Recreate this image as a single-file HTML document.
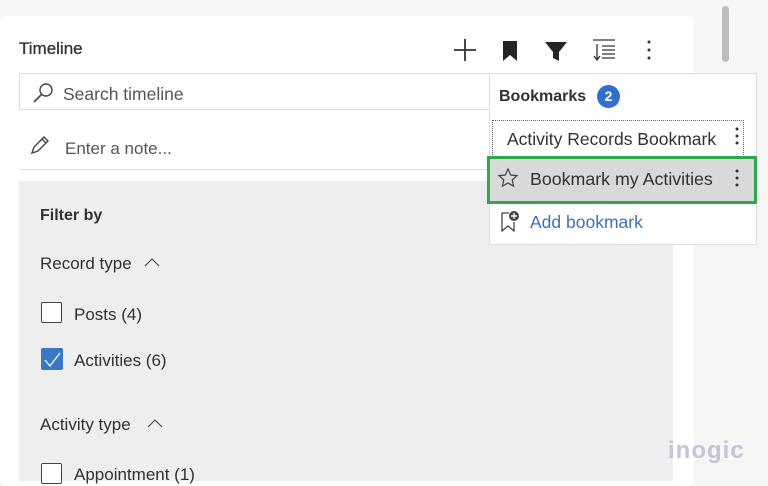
<!DOCTYPE html>
<html><head><style>
body{margin:0;width:768px;height:478px;overflow:hidden;background:#f7f6f5;font-family:"Liberation Sans",sans-serif;color:#323130;position:relative}
.a{position:absolute}
.card{left:0;top:16px;width:694px;height:470px;background:#fff;border-radius:6px}
.t{font-size:17px;white-space:nowrap}
</style></head><body>
<div class="a card"></div>
<div class="a" style="left:722px;top:6px;width:7px;height:56px;background:#bdbdbd;border-radius:4px"></div>
<div class="a t" style="left:19px;top:39px;font-size:17px;-webkit-text-stroke:0.3px #323130">Timeline</div>
<svg class="a" style="left:450px;top:36px" width="220" height="28" viewBox="0 0 220 28">
<path d="M15 3v22M4 14h22" stroke="#333" stroke-width="1.8"/>
<path d="M53 5h14v20l-7-6-7 6z" fill="#252525"/>
<path d="M95 6h22l-8 10v9l-6-3v-6z" fill="#252525"/>
<path d="M143 4h22M147 8v16M144 20l3 4 3-4M152 10h13M152 14h13M152 18h13M152 22h13" stroke="#333" stroke-width="1.3" fill="none"/>
<circle cx="199" cy="6" r="1.5" fill="#333"/><circle cx="199" cy="14" r="1.5" fill="#333"/><circle cx="199" cy="22" r="1.5" fill="#333"/>
</svg>
<div class="a" style="left:19px;top:73px;width:480px;height:37px;border:1px solid #ddd;box-sizing:border-box"></div>
<svg class="a" style="left:32px;top:82px" width="22" height="22"><circle cx="14" cy="8" r="6" fill="none" stroke="#444" stroke-width="1.4"/><path d="M10 12L2 20" stroke="#444" stroke-width="1.6"/></svg>
<div class="a t" style="left:63px;top:84px;color:#555;font-size:17.5px">Search timeline</div>
<svg class="a" style="left:29px;top:134px" width="22" height="22"><path d="M3 19l2-6L15 3l4 4-10 10zM13 5l4 4" fill="none" stroke="#444" stroke-width="1.4"/></svg>
<div class="a t" style="left:65px;top:139px;color:#555">Enter a note...</div>
<div class="a" style="left:19px;top:169px;width:660px;height:1px;background:#ddd"></div>
<div class="a" style="left:19px;top:181px;width:654px;height:300px;background:#eeeeee"></div>
<div class="a t" style="left:40px;top:207px;font-weight:bold;font-size:16px">Filter by</div>
<div class="a t" style="left:40px;top:254px">Record type</div>
<svg class="a" style="left:144px;top:256px" width="16" height="12"><path d="M1 10l7-7 7 7" fill="none" stroke="#444" stroke-width="1.1"/></svg>
<div class="a" style="left:41px;top:302px;width:21px;height:21px;border:1.3px solid #444;border-radius:2px;background:#fff;box-sizing:border-box"></div>
<div class="a t" style="left:74px;top:305px">Posts (4)</div>
<div class="a" style="left:41px;top:348px;width:22px;height:22px;background:#3a78c4;border-radius:2px"></div>
<svg class="a" style="left:41px;top:348px" width="22" height="22"><path d="M4 12l5 6 10-13" fill="none" stroke="#fff" stroke-width="1.3"/></svg>
<div class="a t" style="left:74px;top:351px">Activities (6)</div>
<div class="a t" style="left:40px;top:415px">Activity type</div>
<svg class="a" style="left:147px;top:417px" width="16" height="12"><path d="M1 10l7-7 7 7" fill="none" stroke="#444" stroke-width="1.1"/></svg>
<div class="a" style="left:41px;top:463px;width:21px;height:21px;border:1.3px solid #444;border-radius:2px;background:#fff;box-sizing:border-box"></div>
<div class="a t" style="left:74px;top:465px">Appointment (1)</div>
<div class="a" style="left:489px;top:73px;width:268px;height:172px;background:#fff;border:1px solid #ddd;box-sizing:border-box"></div>
<div class="a t" style="left:499px;top:88px;font-weight:bold;font-size:16px">Bookmarks</div>
<div class="a" style="left:597px;top:85px;width:23px;height:23px;border-radius:50%;background:#2f6fd0;color:#fff;font-size:14px;font-weight:bold;text-align:center;line-height:23px">2</div>
<div class="a" style="left:492px;top:120px;width:252px;height:37px;border:1px dotted #666;box-sizing:border-box"></div>
<div class="a t" style="left:507px;top:129px;font-size:17.5px">Activity Records Bookmark</div>
<div class="a" style="left:487px;top:156px;width:270px;height:48px;background:#d9d9d9;border:3px solid #2fa84b;box-sizing:border-box"></div>
<svg class="a" style="left:497px;top:167px" width="22" height="22"><path d="M11 2l2.7 6 6.3.6-4.8 4.3 1.4 6.3L11 16l-5.6 3.2 1.4-6.3L2 8.6 8.3 8z" fill="none" stroke="#444" stroke-width="1.2"/></svg>
<div class="a t" style="left:530px;top:169px;font-size:17.8px">Bookmark my Activities</div>
<svg class="a" style="left:733px;top:125px" width="8" height="75"><circle cx="4" cy="4" r="1.5" fill="#333"/><circle cx="4" cy="11" r="1.5" fill="#333"/><circle cx="4" cy="18" r="1.5" fill="#333"/><circle cx="4" cy="46" r="1.5" fill="#333"/><circle cx="4" cy="53" r="1.5" fill="#333"/><circle cx="4" cy="60" r="1.5" fill="#333"/></svg>
<svg class="a" style="left:499px;top:209px" width="22" height="24"><path d="M3 4h7M3 4v18l6-5 6 5v-9" fill="none" stroke="#444" stroke-width="1.3"/><circle cx="15" cy="7" r="5" fill="#444"/><path d="M15 4v6M12 7h6" stroke="#fff" stroke-width="1.4"/></svg>
<div class="a t" style="left:530px;top:212px;color:#3d72b4;font-size:17.5px">Add bookmark</div>
<div class="a" style="left:668px;top:437px;font-size:24px;font-weight:bold;color:#c3c6d8;letter-spacing:1px">inogic</div>
</body></html>
